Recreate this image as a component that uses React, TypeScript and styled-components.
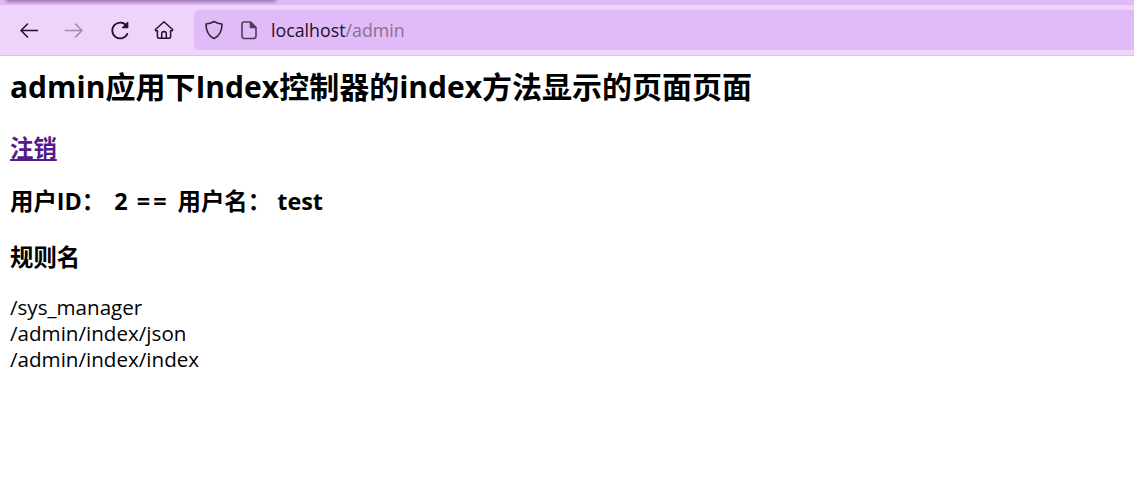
import React from 'react'
import styled, { createGlobalStyle } from 'styled-components'

const GlobalStyle = createGlobalStyle`
    html, body {
        margin: 0;
        padding: 0;
        background: #fff;
    }
    body {
        font-family: 'Open Sans', 'Noto Sans CJK SC', sans-serif;
        color: #000;
    }
`

const Frame = styled.div`
    width: 1134px;
    height: 478px;
    overflow: hidden;
`

const TabStrip = styled.div`
    position: relative;
    height: 5px;
    background: #e1bbf7;
`

const TabShadow = styled.div`
    position: absolute;
    left: 6px;
    top: -4px;
    width: 270px;
    height: 4px;
    box-shadow: 0 1px 4px rgba(70, 40, 90, 0.75);
`

const Toolbar = styled.div`
    height: 50px;
    display: flex;
    align-items: center;
    padding: 0 0 0 12px;
    background: #eed3fb;
    border-bottom: 1px solid #e1bbf7;
`

const NavButton = styled.div`
    width: 34px;
    height: 34px;
    margin-right: 11px;
    display: flex;
    align-items: center;
    justify-content: center;
    flex: none;
`

const UrlBar = styled.div`
    flex: 1;
    height: 40px;
    margin-left: 2px;
    display: flex;
    align-items: center;
    padding-left: 10px;
    background: #e1bbf7;
    border-radius: 5px 0 0 5px;
`

const UrlIcon = styled.div<{ $gap: number }>`
    width: 20px;
    height: 20px;
    margin-right: ${p => p.$gap}px;
    flex: none;
    display: flex;
`

const UrlText = styled.div`
    font-family: 'Open Sans', sans-serif;
    font-size: 17.8px;
    color: #20132a;
`

const UrlPath = styled.span`
    color: #85708f;
`

const Content = styled.div`
    padding: 0 10px;
`

const Title = styled.h1`
    margin: 12px 0 0;
    font-size: 30px;
    line-height: 38px;
    font-weight: 700;
`

const Heading = styled.h3<{ $top: number }>`
    margin: ${p => p.$top}px 0 0;
    font-size: 23.4px;
    line-height: 30px;
    font-weight: 700;
`

const LogoutLink = styled.a`
    color: #551a8b;
    text-decoration: underline;
`

const UserId = styled.span`
    margin-left: 3px;
`

const Equals = styled.span`
    margin: 0 2px 0 3px;
    letter-spacing: 3px;
`

const RuleList = styled.div`
    margin-top: 22px;
    font-size: 20.6px;
    line-height: 26px;
`

const icon = { fill: 'none', strokeLinecap: 'round', strokeLinejoin: 'round' } as const

function App() {
    return (
        <Frame>
            <GlobalStyle />
            <TabStrip>
                <TabShadow />
            </TabStrip>
            <Toolbar>
                <NavButton>
                    <svg width="20" height="20" viewBox="0 0 20 20" {...icon} stroke="#20132a" strokeWidth="1.6">
                        <path d="M18.500 10.500H2M8.500 4l-6.500 6.500 6.500 6.500" />
                    </svg>
                </NavButton>
                <NavButton>
                    <svg width="20" height="20" viewBox="0 0 20 20" {...icon} stroke="#a587b4" strokeWidth="1.6">
                        <path d="M1.500 10.500H18M11.500 4l6.500 6.500-6.500 6.500" />
                    </svg>
                </NavButton>
                <NavButton>
                    <svg width="22" height="22" viewBox="-1 -1 20 20" {...icon} stroke="#20132a" strokeWidth="1.6">
                        <path d="M16.600 12.500a7.200 7.200 0 1 1-.6-7.200" />
                        <path d="M17 2v5h-5z" fill="#20132a" strokeWidth="1" />
                    </svg>
                </NavButton>
                <NavButton>
                    <svg width="20" height="20" viewBox="0 0 20 20" {...icon} stroke="#20132a" strokeWidth="1.5">
                        <path d="M1.500 9.500 10 1.800l8.500 7.700c.4.6 0 1.300-.7 1.300H16.600v6a1.500 1.500 0 0 1-1.500 1.500H4.900a1.500 1.500 0 0 1-1.500-1.500v-6H2.200c-.7 0-1.100-.7-.7-1.300z" />
                        <path d="M7.700 18.300v-4.500a2.300 2.300 0 0 1 4.600 0v4.500" />
                    </svg>
                </NavButton>
                <UrlBar>
                    <UrlIcon $gap={15}>
                        <svg width="20" height="20" viewBox="0 0 20 20" {...icon} stroke="#2f2238" strokeWidth="1.6">
                            <path d="M10 1.500c2.500 1.500 5 2.300 8 2.500 0 6.500-1.500 11.500-8 14.500C3.500 15.500 2 10.500 2 4c3-.2 5.500-1 8-2.500z" />
                        </svg>
                    </UrlIcon>
                    <UrlIcon $gap={12}>
                        <svg width="20" height="20" viewBox="0 0 20 20" {...icon} stroke="#4f3c5c" strokeWidth="1.6">
                            <path d="M5 2h6.500L17 7.500V16a2.500 2.500 0 0 1-2.500 2.500h-9A2.500 2.500 0 0 1 3 16V4a2 2 0 0 1 2-2z" />
                            <path d="M11.500 2.500V7.500H16.500z" fill="#4f3c5c" />
                        </svg>
                    </UrlIcon>
                    <UrlText>
                        localhost<UrlPath>/admin</UrlPath>
                    </UrlText>
                </UrlBar>
            </Toolbar>
            <Content>
                <Title>admin应用下Index控制器的index方法显示的页面页面</Title>
                <Heading $top={27}>
                    <LogoutLink href="#">注销</LogoutLink>
                </Heading>
                <Heading $top={23}>
                    用户ID：<UserId> 2 </UserId>
                    <Equals>==</Equals> 用户名： test
                </Heading>
                <Heading $top={26}>规则名</Heading>
                <RuleList>
                    /sys_manager
                    <br />
                    /admin/index/json
                    <br />
                    /admin/index/index
                </RuleList>
            </Content>
        </Frame>
    )
}

export default App
